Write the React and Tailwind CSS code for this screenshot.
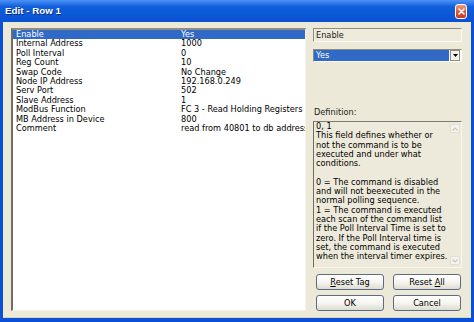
const rows = [
  ['Enable', 'Yes'],
  ['Internal Address', '1000'],
  ['Poll Interval', '0'],
  ['Reg Count', '10'],
  ['Swap Code', 'No Change'],
  ['Node IP Address', '192.168.0.249'],
  ['Serv Port', '502'],
  ['Slave Address', '1'],
  ['ModBus Function', 'FC 3 - Read Holding Registers (4x)'],
  ['MB Address in Device', '800'],
  ['Comment', 'read from 40801 to db address 0'],
]

const definition = [
  '0, 1',
  'This field defines whether or',
  'not the command is to be',
  'executed and under what',
  'conditions.',
  '\u00a0',
  '0 = The command is disabled',
  'and will not beexecuted in the',
  'normal polling sequence.',
  '1 = The command is executed',
  'each scan of the command list',
  'if the Poll Interval Time is set to',
  'zero. If the Poll Interval time is',
  'set, the command is executed',
  'when the interval timer expires.',
]

function XpButton({ children }) {
  return (
    <button className="h-[16px] flex items-center justify-center rounded-[3px] border border-[#5d6b82] bg-linear-to-b from-[#ffffff] via-[#f6f5f0] to-[#dedcd2] text-black leading-none">
      <span>{children}</span>
    </button>
  )
}

function ScrollArrow({ up }) {
  return (
    <div className="w-[10px] h-[9px] rounded-[1px] border border-[#e2e0d6] bg-[#f4f3ee] flex items-center justify-center">
      <svg width="6" height="4" viewBox="0 0 6 4">
        <path d={up ? 'M0.5 3.5 L3 1 L5.5 3.5' : 'M0.5 0.5 L3 3 L5.5 0.5'} fill="none" stroke="#c9c7bc" strokeWidth="1.2" />
      </svg>
    </div>
  )
}

export default function App() {
  return (
    <div className="w-[474px] h-[322px] flex flex-col bg-[#0a4fd6] overflow-hidden font-['DejaVu_Sans',sans-serif] text-[8.2px] text-black">
      {/* title bar */}
      <div className="h-[22px] shrink-0 flex items-center justify-between pl-[5px] pr-[7px] bg-linear-to-b from-[#4c93f6] via-[#0f5fdc] via-30% to-[#0b51d2]">
        <span className="font-['Liberation_Sans',sans-serif] font-bold text-[9.8px] text-white [text-shadow:1px_1px_0_#0a2a88]">Edit - Row 1</span>
        <div className="w-[12px] h-[15px] rounded-[3px] border border-white bg-linear-to-b from-[#f19a80] via-[#df5a3c] to-[#c23a1f] flex items-center justify-center">
          <svg width="7" height="7" viewBox="0 0 7 7">
            <path d="M1 1 L6 6 M6 1 L1 6" stroke="white" strokeWidth="1.6" strokeLinecap="round" />
          </svg>
        </div>
      </div>

      {/* body */}
      <div className="flex-1 mx-[3px] mb-[5px] bg-[#ece9d8] flex pt-[6px] pb-[6px] pl-[8px] pr-[9px] gap-[7px] border-b border-[#d8d4c2]">
        {/* property list */}
        <div className="w-[295px] bg-white border-l-2 border-t-2 border-r border-b border-l-[#6f6d64] border-t-[#8e8b80] border-r-[#f4f2ea] border-b-[#f4f2ea] overflow-hidden">
          {rows.map(([k, v], i) => (
            <div
              key={k}
              className={`h-[9.4px] leading-[9.4px] flex whitespace-nowrap ${i === 0 ? 'bg-[#3169c6] text-white' : ''}`}
            >
              <div className="w-[168px] shrink-0 pl-[3px]">{k}</div>
              <div className="flex-1 overflow-hidden">{v}</div>
            </div>
          ))}
        </div>

        {/* right panel */}
        <div className="w-[149px] flex flex-col">
          <div className="h-[14px] flex items-center pl-[2px] border border-t-[#8e8b80] border-l-[#8e8b80] border-r-[#fbfaf6] border-b-[#fbfaf6] bg-[#eeebdc] text-[#222]">
            Enable
          </div>

          <div className="mt-[7px] h-[13px] flex items-center border border-t-[#8e8b80] border-l-[#8e8b80] border-r-[#fbfaf6] border-b-[#fbfaf6] bg-white">
            <div className="flex-1 h-full flex items-center pl-[2px] bg-[#3169c6] text-white">Yes</div>
            <div className="w-[10px] h-[11px] mx-px border border-[#8e8b80] bg-[#f2f1ea] flex items-center justify-center">
              <svg width="5" height="3" viewBox="0 0 5 3">
                <path d="M0 0 L5 0 L2.5 3 Z" fill="black" />
              </svg>
            </div>
          </div>

          <div className="mt-[45px] h-[11px] leading-[11px] pl-px text-[#222]">Definition:</div>

          <div className="mt-[3px] h-[147px] flex border border-t-[#7e7b70] border-l-[#6f6d64] border-r-[#f7f5ee] border-b-[#f7f5ee] bg-[#edeadb]">
            <div className="flex-1 pl-[2px] leading-[9.3px] whitespace-nowrap overflow-hidden">
              {definition.map((l, i) => (
                <div key={i}>{l}</div>
              ))}
            </div>
            <div className="w-[12px] flex flex-col justify-between items-center py-[2px]">
              <ScrollArrow up />
              <ScrollArrow />
            </div>
          </div>

          <div className="mt-[6px] pl-[3px] pr-px grid grid-cols-2 gap-x-[9px] gap-y-[5px]">
            <XpButton><span className="underline">R</span>eset Tag</XpButton>
            <XpButton>Reset <span className="underline">A</span>ll</XpButton>
            <XpButton>OK</XpButton>
            <XpButton>Cancel</XpButton>
          </div>
        </div>
      </div>
    </div>
  )
}
